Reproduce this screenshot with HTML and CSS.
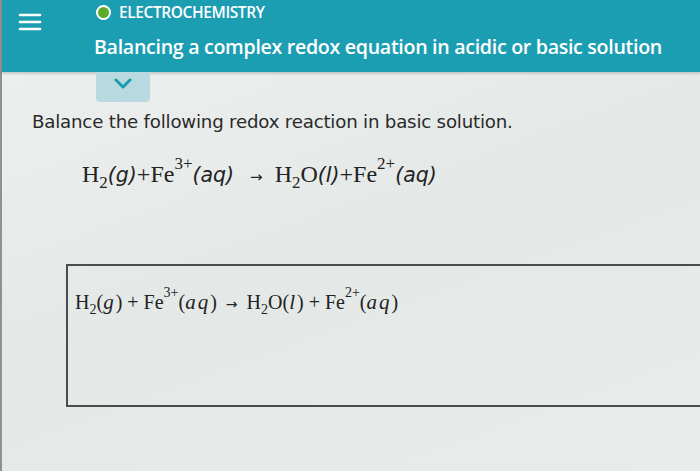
FILE: index.html
```html
<!DOCTYPE html>
<html>
<head>
<meta charset="utf-8">
<link rel="stylesheet" href="styles.css">
</head>
<body>
<div class="page">
  <header class="topbar">
    <div class="menu">
      <svg width="24" height="20" viewBox="0 0 24 20"><g stroke="#fff" stroke-width="2.6" stroke-linecap="round"><line x1="2" y1="3" x2="22" y2="3"/><line x1="2" y1="10" x2="22" y2="10"/><line x1="2" y1="17" x2="22" y2="17"/></g></svg>
    </div>
    <div class="titles">
      <div class="topic"><span class="dot"></span>ELECTROCHEMISTRY</div>
      <div class="title">Balancing a complex redox equation in acidic or basic solution</div>
    </div>
  </header>
  <div class="tab">
    <svg width="20" height="12" viewBox="0 0 20 12"><polyline points="3,2 10,9 17,2" fill="none" stroke="#1a9bb0" stroke-width="3" stroke-linecap="round" stroke-linejoin="round"/></svg>
  </div>
  <main class="content">
    <p class="prompt">Balance the following redox reaction in basic solution.</p>
    <div class="equation">
      <span class="sr">H<sub>2</sub></span><span class="it">(g)</span><span class="sr">+Fe<sup>3+</sup></span><span class="it">(aq)</span>
      <span class="arrow">→</span>
      <span class="sr">H<sub>2</sub>O</span><span class="it">(l)</span><span class="sr">+Fe<sup>2+</sup></span><span class="it">(aq)</span>
    </div>
    <div class="answer">
      <div class="ans-eq">H<sub>2</sub>(<i>g</i>) + Fe<sup>3+</sup>(<i>aq</i>) <span class="arr2">→</span> H<sub>2</sub>O(<i>l</i>) + Fe<sup>2+</sup>(<i>aq</i>)</div>
    </div>
  </main>
</div>
</body>
</html>
```
FILE: styles.css
```css
html, body {
  margin: 0;
  padding: 0;
}
body {
  width: 700px;
  height: 471px;
  overflow: hidden;
  background: #e6eaea;
  font-family: "Liberation Sans", Arial, sans-serif;
}
.page {
  height: 471px;
  background: linear-gradient(160deg, #eef0ef 0%, #e4e9e8 50%, #e8ecea 100%);
  border-left: 2px solid #8d9394;
  box-sizing: border-box;
}
.topbar {
  height: 72px;
  background: #1c9eb2;
  display: flex;
  align-items: flex-start;
  box-shadow: 0 2px 2px rgba(0,0,0,0.15);
}
.menu {
  width: 92px;
  padding: 12px 0 0 16px;
  box-sizing: border-box;
}
.titles {
  padding-top: 2px;
  color: #fff;
}
.topic {
  display: flex;
  align-items: center;
  font-family: "Open Sans", "Liberation Sans", sans-serif;
  font-size: 15.5px;
  font-weight: 600;
  letter-spacing: -0.4px;
  height: 20px;
}
.dot {
  width: 11px;
  height: 11px;
  border-radius: 50%;
  background: #5aab2a;
  border: 2px solid #fff;
  margin: 0 8px 0 2px;
}
.title {
  font-family: "Open Sans", "Liberation Sans", sans-serif;
  font-size: 19.6px;
  font-weight: 600;
  letter-spacing: -0.3px;
  margin-top: 11px;
}
.tab {
  margin-left: 94px;
  width: 54px;
  height: 30px;
  background: #b8d9df;
  border-radius: 0 0 4px 4px;
  display: flex;
  justify-content: center;
  padding-top: 6px;
  box-sizing: border-box;
}
.content {
  padding-left: 30px;
}
.prompt {
  margin: 9px 0 0 0;
  font-family: "DejaVu Sans", sans-serif;
  font-size: 18.2px;
  color: #2a2a2a;
  letter-spacing: -0.2px;
}
.equation {
  margin: 29px 0 0 50px;
  font-size: 24px;
  color: #222;
  display: flex;
  align-items: baseline;
}
.sr {
  font-family: "Liberation Serif", serif;
}
.it {
  font-family: "DejaVu Sans", sans-serif;
  font-style: italic;
  font-size: 20.5px;
}
.equation sub {
  font-size: 17px;
  vertical-align: -6px;
}
.equation sup {
  font-size: 17px;
  vertical-align: 13px;
  line-height: 0;
}
.arrow {
  font-size: 15px;
  margin: 0 12px 0 16px;
  font-family: "DejaVu Sans", sans-serif;
}
.answer {
  margin: 71px 0 0 34px;
  height: 143px;
  border: 2px solid #4a4d4e;
  border-right: none;
  box-sizing: border-box;
}
.ans-eq {
  margin: 24px 0 0 7px;
  font-family: "Liberation Serif", serif;
  font-size: 20px;
  color: #222;
}
.ans-eq i {
  font-size: 21px;
  letter-spacing: 2px;
}
.ans-eq sub {
  font-size: 14px;
  vertical-align: -5px;
}
.ans-eq sup {
  font-size: 14px;
  vertical-align: 12px;
  line-height: 0;
}
.arr2 {
  font-size: 14px;
  margin: 0 4px;
  font-family: "DejaVu Sans", sans-serif;
}
```
